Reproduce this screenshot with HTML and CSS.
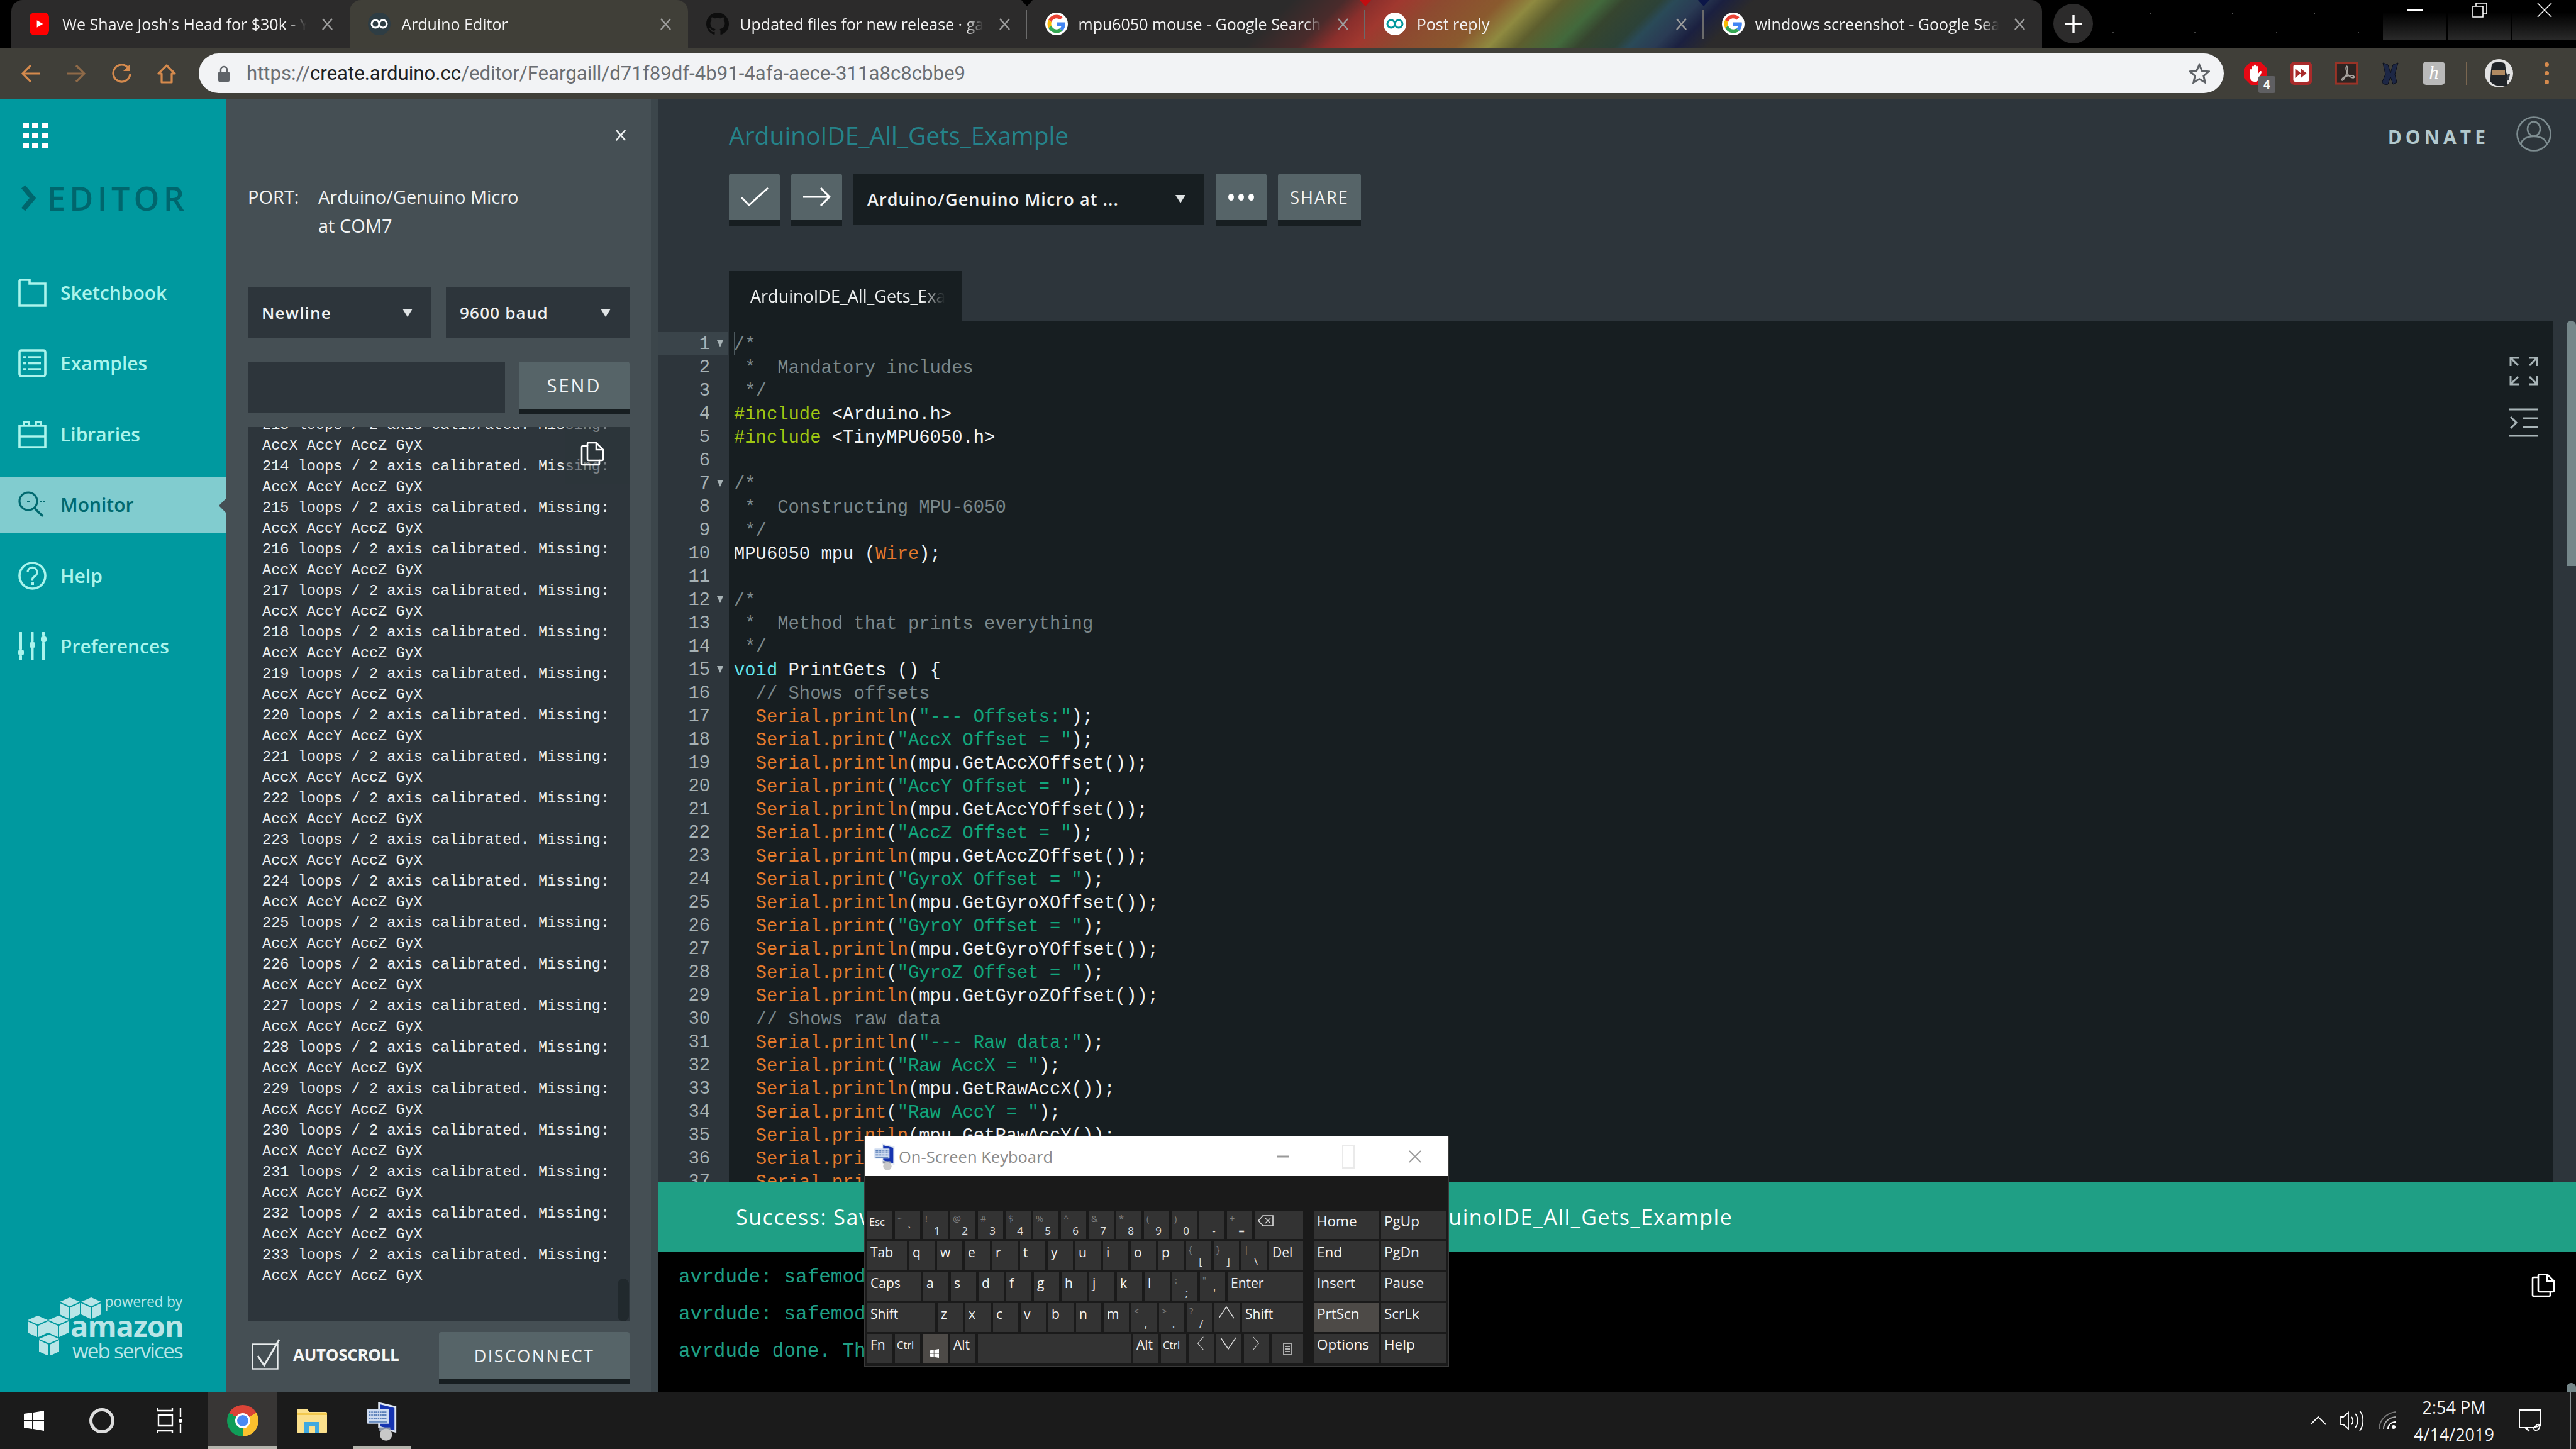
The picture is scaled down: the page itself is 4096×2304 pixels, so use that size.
FILE: index.html
```html
<!DOCTYPE html>
<html lang="en">
<head>
<meta charset="utf-8">
<title>Arduino Editor</title>
<link rel="stylesheet" href="styles.css">
</head>
<body>
<svg class="defs" aria-hidden="true">
  <symbol id="x" viewBox="0 0 20 20"><path d="M2 1l16 18M18 1L2 19" fill="none" stroke="currentColor" stroke-width="2.6"/></symbol>
  <symbol id="g" viewBox="-6 -6 60 60"><circle cx="24" cy="24" r="30" fill="#fff"/><path fill="#EA4335" d="M24 9.5c3.54 0 6.71 1.22 9.21 3.6l6.85-6.85C35.9 2.38 30.47 0 24 0 14.62 0 6.51 5.38 2.56 13.22l7.98 6.19C12.43 13.72 17.74 9.5 24 9.5z"/><path fill="#4285F4" d="M46.98 24.55c0-1.57-.15-3.09-.38-4.55H24v9.02h12.94c-.58 2.96-2.26 5.48-4.78 7.18l7.73 6c4.51-4.18 7.09-10.36 7.09-17.65z"/><path fill="#FBBC05" d="M10.53 28.59c-.48-1.45-.76-2.99-.76-4.59s.27-3.14.76-4.59l-7.98-6.19C.92 16.46 0 20.12 0 24c0 3.88.92 7.54 2.56 10.78l7.97-6.19z"/><path fill="#34A853" d="M24 48c6.48 0 11.93-2.13 15.89-5.81l-7.73-6c-2.15 1.45-4.92 2.3-8.16 2.3-6.26 0-11.57-4.22-13.47-9.91l-7.98 6.19C6.51 42.62 14.62 48 24 48z"/></symbol>
  <symbol id="copy" viewBox="0 0 38 38"><path d="M11 6V3a2 2 0 0 1 2-2h12l11 11v15a2 2 0 0 1-2 2h-4M25 1v11h11" fill="none" stroke="currentColor" stroke-width="2.6"/><path d="M11 6H4a2 2 0 0 0-2 2v26a2 2 0 0 0 2 2h24a2 2 0 0 0 2-2v-5H13a2 2 0 0 1-2-2z" fill="none" stroke="currentColor" stroke-width="2.6"/></symbol>
  <symbol id="cube" viewBox="0 0 32 34"><path d="M16 0l16 7-16 7L0 7z"/><path d="M0 9l15 7v18L0 27z"/><path d="M32 9l-15 7v18l15-7z"/></symbol>
  <symbol id="osk" viewBox="0 0 54 66"><path d="M20 2l30 7v44l-30-8z" fill="#dfe7f2"/><path d="M23 6l24 6v37l-24-7z" fill="#1533b0"/><rect x="2" y="14" width="36" height="24" rx="1" fill="#cfdcf0"/><path d="M5 19h30M5 24h30M5 29h30" stroke="#5a7fb8" stroke-width="2.6" stroke-dasharray="2.6 1"/><rect x="5" y="33" width="30" height="3" fill="#6a8dc0"/><path d="M22 44h18v6H22z" fill="#8d96a8"/><circle cx="33" cy="56" r="10" fill="#c8c8c8"/></symbol>
</svg>

<header class="tabstrip">
  <div class="tabs">
    <div class="tab">
      <svg class="fav-yt" viewBox="0 0 32 36"><rect width="32" height="36" rx="7" fill="#f00"/><path d="M12 12l10 6-10 6z" fill="#fff"/></svg>
      <span class="tab-title">We Shave Josh's Head for $30k - YouTube</span>
      <svg class="tab-x"><use href="#x"/></svg>
    </div>
    <div class="tab active">
      <svg class="fav" viewBox="0 0 36 36"><circle cx="18" cy="18" r="18" fill="#2e3d44"/><g fill="none" stroke="#fff" stroke-width="3"><circle cx="12" cy="18" r="6"/><circle cx="24" cy="18" r="6"/></g></svg>
      <span class="tab-title">Arduino Editor</span>
      <svg class="tab-x"><use href="#x"/></svg>
    </div>
    <div class="tab notch-black">
      <svg class="fav" viewBox="0 0 16 16"><path fill="#0d0d0d" d="M8 0C3.58 0 0 3.58 0 8c0 3.54 2.29 6.53 5.47 7.59.4.07.55-.17.55-.38 0-.19-.01-.82-.01-1.49-2.01.37-2.53-.49-2.69-.94-.09-.23-.48-.94-.82-1.13-.28-.15-.68-.52-.01-.53.63-.01 1.08.58 1.23.82.72 1.21 1.87.87 2.33.66.07-.52.28-.87.51-1.07-1.78-.2-3.64-.89-3.64-3.95 0-.87.31-1.59.82-2.15-.08-.2-.36-1.02.08-2.12 0 0 .67-.21 2.2.82.64-.18 1.32-.27 2-.27.68 0 1.36.09 2 .27 1.53-1.04 2.2-.82 2.2-.82.44 1.1.16 1.92.08 2.12.51.56.82 1.27.82 2.15 0 3.07-1.87 3.75-3.65 3.95.29.25.54.73.54 1.48 0 1.07-.01 1.93-.01 2.2 0 .21.15.46.55.38A8.013 8.013 0 0016 8c0-4.42-3.58-8-8-8z"/></svg>
      <span class="tab-title">Updated files for new release · gabriel</span>
      <svg class="tab-x"><use href="#x"/></svg>
    </div>
    <div class="tab notch-red">
      <svg class="fav"><use href="#g"/></svg>
      <span class="tab-title">mpu6050 mouse - Google Search</span>
      <svg class="tab-x"><use href="#x"/></svg>
    </div>
    <div class="tab notch-navy">
      <svg class="fav" viewBox="0 0 36 36"><circle cx="18" cy="18" r="18" fill="#fff"/><g fill="none" stroke="#00979c" stroke-width="3"><circle cx="12" cy="18" r="6"/><circle cx="24" cy="18" r="6"/></g></svg>
      <span class="tab-title">Post reply</span>
      <svg class="tab-x"><use href="#x"/></svg>
    </div>
    <div class="tab last">
      <svg class="fav"><use href="#g"/></svg>
      <span class="tab-title">windows screenshot - Google Search</span>
      <svg class="tab-x"><use href="#x"/></svg>
    </div>
  </div>
  <div class="newtab"><svg viewBox="0 0 28 28"><path d="M14 0v28M0 14h28" stroke="#fff" stroke-width="3.4"/></svg></div>
  <div class="caption">
    <div class="cap-btn"><svg viewBox="0 0 24 24"><path d="M0 12h24" stroke="#fff" stroke-width="2"/></svg></div>
    <div class="cap-btn"><svg viewBox="0 0 24 24"><path d="M1 6h16v17H1zM6 6V1h17v17h-6" fill="none" stroke="#fff" stroke-width="1.6"/></svg></div>
    <div class="cap-btn"><svg viewBox="0 0 24 24"><path d="M1 1l22 22M23 1L1 23" stroke="#fff" stroke-width="1.6"/></svg></div>
  </div>
</header>

<nav class="toolbar">
  <svg class="tb-ico" viewBox="0 0 30 32"><path d="M29 16H3M15 3L2 16l13 13" fill="none" stroke="#d58a4d" stroke-width="3.2"/></svg>
  <svg class="tb-ico dim" viewBox="0 0 30 32"><path d="M1 16h26M15 3l13 13-13 13" fill="none" stroke="#8f6a48" stroke-width="3.2"/></svg>
  <svg class="tb-ico" viewBox="0 0 30 32"><path d="M26 7a13.5 13.5 0 1 0 3 9" fill="none" stroke="#d58a4d" stroke-width="3.2"/><path d="M29 1v11H18z" fill="#d58a4d"/></svg>
  <svg class="tb-ico" viewBox="0 0 30 32"><path d="M15 3L2 16h5v14h16V16h5z" fill="none" stroke="#d58a4d" stroke-width="3.2" stroke-linejoin="round"/></svg>
  <div class="address">
    <svg class="lock" viewBox="0 0 18 26"><path d="M4 11V7a5 5 0 0 1 10 0v4" fill="none" stroke="#5f6368" stroke-width="2.4"/><rect y="10" width="18" height="16" rx="2" fill="#5f6368"/></svg>
    <span class="url"><span class="url-dim">https://</span>create.arduino.cc<span class="url-dim">/editor/Feargaill/d71f89df-4b91-4afa-aece-311a8c8cbbe9</span></span>
    <svg class="star" viewBox="0 0 34 34"><path d="M17 3l4.3 9.6 10.4 1.1-7.8 7 2.2 10.3L17 25.8 7.900 31l2.200-10.300-7.800-7 10.400-1.100z" fill="none" stroke="#5f6368" stroke-width="3"/></svg>
  </div>
  <div class="exts">
    <div class="ext-ab">
      <svg viewBox="0 0 37 37"><path d="M11 0h15l11 11v15L26 37H11L0 26V11z" fill="#e50914"/><path d="M10 22V13a1.500 1.500 0 0 1 3 0v5V8a1.500 1.500 0 0 1 3 0v9V6a1.500 1.500 0 0 1 3 0v11V8a1.500 1.500 0 0 1 3 0v12l3-4a1.500 1.500 0 0 1 3 1l-4 10c-1 3-3 5-7 5-5 0-7-3-7-7z" fill="#fff"/></svg>
      <span class="badge">4</span>
    </div>
    <svg class="ext-i" viewBox="0 0 35 37"><rect width="35" height="37" rx="7" fill="#a92b2b"/><rect x="5" y="5" width="25" height="27" rx="3" fill="#fff"/><path d="M8 11l9 7.500-9 7.500zM17 11l9 7.500-9 7.500z" fill="#a92b2b"/></svg>
    <svg class="ext-i" viewBox="0 0 37 37"><rect x="1.500" y="1.500" width="34" height="34" fill="#2d2422" stroke="#9a3327" stroke-width="3"/><path d="M19 7c-3 2 0 10 1 12s5 7 9 7 2-4-2-4-11 1-14 4-3 4-1 4 7-10 8-14 0-9-1-9z" fill="none" stroke="#a9a39f" stroke-width="2"/></svg>
    <svg class="ext-z" viewBox="0 0 31 37"><path d="M4 2l8 3 4 13 4-13 8-3-5 18 3 13-6 3-4-12-4 12c-4 1-9 0-9-4l5-12z" fill="#1d2745" stroke="#0b0f1c" stroke-width="1"/></svg>
    <div class="ext-h">h</div>
    <div class="tb-sep"></div>
    <svg class="avatar" viewBox="0 0 45 45"><circle cx="22.500" cy="22.500" r="22.500" fill="#e2e2e2"/><path d="M9 36c0-8 1-26 3-29 4-3 17-3 20 0l2 14 3 8-2 13c-4 2-20 2-26-6z" fill="#202428"/><rect x="12" y="18" width="20" height="8" fill="#b08a62"/><path d="M34 32l3-9 3 1-2 10z" fill="#3a3f45"/></svg>
    <div class="menu-dots"><i></i><i></i><i></i></div>
  </div>
</nav>

<div class="app">
  <aside class="sidebar">
    <div class="apps-grid"><i></i><i></i><i></i><i></i><i></i><i></i><i></i><i></i><i></i></div>
    <div class="brand">
      <svg viewBox="0 0 26 42"><path d="M5 3l15 18L5 39" fill="none" stroke="#00666d" stroke-width="8"/></svg>
      <span>EDITOR</span>
    </div>
    <ul class="nav">
      <li class="nav-item"><svg viewBox="0 0 45 45"><path d="M2 43V4c0-1 1-2 2-2h14v6h25v35z" fill="none" stroke="currentColor" stroke-width="3.600"/></svg>Sketchbook</li>
      <li class="nav-item"><svg viewBox="0 0 45 45"><rect x="2" y="2" width="41" height="41" rx="3" fill="none" stroke="currentColor" stroke-width="3.600"/><path d="M16 13h20M16 22.500h20M16 32h20" stroke="currentColor" stroke-width="3.600"/><path d="M8 13h4M8 22.500h4M8 32h4" stroke="currentColor" stroke-width="3.600"/></svg>Examples</li>
      <li class="nav-item"><svg viewBox="0 0 45 45"><path d="M2 9h41v34H2zM2 26h41M9 8V3h8v5M28 8V3h8v5" fill="none" stroke="currentColor" stroke-width="3.600"/></svg>Libraries</li>
      <li class="nav-item active"><svg viewBox="0 0 45 45"><circle cx="16" cy="17" r="14" fill="none" stroke="currentColor" stroke-width="3.200"/><path d="M26 28l13 13" stroke="currentColor" stroke-width="3.600"/><path d="M14 16h4v3h-4zM35 16h3v3h-3zM40 16h3v3h-3z" fill="currentColor"/></svg>Monitor</li>
      <li class="nav-item"><svg viewBox="0 0 45 45"><circle cx="22.500" cy="22.500" r="20.500" fill="none" stroke="currentColor" stroke-width="3.600"/><path d="M15 17a7.500 7.500 0 1 1 11 6.500c-2 1-3.500 2.500-3.500 5v2" fill="none" stroke="currentColor" stroke-width="3.200"/><rect x="20" y="33" width="5" height="4" fill="currentColor"/></svg>Help</li>
      <li class="nav-item"><svg viewBox="0 0 45 45"><path d="M4 1v26M4 38v6M22.500 1v14M22.500 26v18M40 1v4M40 17v27" stroke="currentColor" stroke-width="4" stroke-linecap="round"/><rect x="0" y="28" width="9" height="9" rx="3" fill="currentColor"/><rect x="18" y="16" width="9" height="9" rx="3" fill="currentColor"/><rect x="36" y="7" width="9" height="9" rx="3" fill="currentColor"/></svg>Preferences</li>
    </ul>
    <div class="aws">
      <svg class="aws-cubes" viewBox="0 0 118 92" fill="#b9e5e7"><use href="#cube" x="51" y="0" width="32" height="34"/><use href="#cube" x="85" y="0" width="32" height="34"/><use href="#cube" x="0" y="29" width="32" height="34"/><use href="#cube" x="33" y="29" width="32" height="34"/><use href="#cube" x="18" y="59" width="32" height="34"/></svg>
      <div class="aws-by">powered by</div>
      <div class="aws-amazon">amazon</div>
      <div class="aws-ws">web services</div>
    </div>
  </aside>

  <section class="panel">
    <div class="panel-close"><svg viewBox="0 0 20 20"><use href="#x"/></svg></div>
    <div class="port"><span class="port-label">PORT:</span><span class="port-name">Arduino/Genuino Micro<br>at COM7</span></div>
    <div class="panel-selects">
      <div class="select">Newline<i class="caret"></i></div>
      <div class="select">9600 baud<i class="caret"></i></div>
    </div>
    <div class="panel-send">
      <div class="send-input"></div>
      <div class="btn send-btn">SEND</div>
    </div>
    <div class="log">
<pre class="log-text">213 loops / 2 axis calibrated. Missing:
AccX AccY AccZ GyX
214 loops / 2 axis calibrated. Missing:
AccX AccY AccZ GyX
215 loops / 2 axis calibrated. Missing:
AccX AccY AccZ GyX
216 loops / 2 axis calibrated. Missing:
AccX AccY AccZ GyX
217 loops / 2 axis calibrated. Missing:
AccX AccY AccZ GyX
218 loops / 2 axis calibrated. Missing:
AccX AccY AccZ GyX
219 loops / 2 axis calibrated. Missing:
AccX AccY AccZ GyX
220 loops / 2 axis calibrated. Missing:
AccX AccY AccZ GyX
221 loops / 2 axis calibrated. Missing:
AccX AccY AccZ GyX
222 loops / 2 axis calibrated. Missing:
AccX AccY AccZ GyX
223 loops / 2 axis calibrated. Missing:
AccX AccY AccZ GyX
224 loops / 2 axis calibrated. Missing:
AccX AccY AccZ GyX
225 loops / 2 axis calibrated. Missing:
AccX AccY AccZ GyX
226 loops / 2 axis calibrated. Missing:
AccX AccY AccZ GyX
227 loops / 2 axis calibrated. Missing:
AccX AccY AccZ GyX
228 loops / 2 axis calibrated. Missing:
AccX AccY AccZ GyX
229 loops / 2 axis calibrated. Missing:
AccX AccY AccZ GyX
230 loops / 2 axis calibrated. Missing:
AccX AccY AccZ GyX
231 loops / 2 axis calibrated. Missing:
AccX AccY AccZ GyX
232 loops / 2 axis calibrated. Missing:
AccX AccY AccZ GyX
233 loops / 2 axis calibrated. Missing:
AccX AccY AccZ GyX</pre>
      <div class="log-fade"></div>
      <svg class="log-copy"><use href="#copy"/></svg>
      <div class="log-thumb"></div>
    </div>
    <div class="panel-foot">
      <div class="autoscroll">
        <svg viewBox="0 0 46 50"><rect x="1.500" y="9.500" width="40" height="39" fill="none" stroke="#e8eced" stroke-width="2.400"/><path d="M10 28l10 15L44 2" fill="none" stroke="#e8eced" stroke-width="3"/></svg>
        <span>AUTOSCROLL</span>
      </div>
      <div class="btn disc-btn">DISCONNECT</div>
    </div>
  </section>

  <main class="main">
    <div class="main-head">
      <div class="title-row">
        <span class="sketch-title">ArduinoIDE_All_Gets_Example</span>
        <span class="donate">DONATE</span>
        <svg class="user" viewBox="0 0 56 56"><circle cx="28" cy="28" r="26.500" fill="none" stroke="#7d8c90" stroke-width="2.600"/><ellipse cx="28" cy="20" rx="10" ry="11.500" fill="none" stroke="#7d8c90" stroke-width="2.600"/><path d="M7 45c2-9 10-13 21-13s19 4 21 13" fill="none" stroke="#7d8c90" stroke-width="2.600"/></svg>
      </div>
      <div class="action-row">
        <div class="btn icon-btn"><svg viewBox="0 0 44 30"><path d="M1 16l12 12L43 1" fill="none" stroke="#fff" stroke-width="3"/></svg></div>
        <div class="btn icon-btn"><svg viewBox="0 0 44 30"><path d="M0 15h42M28 1l14 14-14 14" fill="none" stroke="#fff" stroke-width="3"/></svg></div>
        <div class="select board">Arduino/Genuino Micro at ...<i class="caret"></i></div>
        <div class="btn icon-btn dots"><i></i><i></i><i></i></div>
        <div class="btn share-btn">SHARE</div>
      </div>
      <div class="file-tabs"><div class="file-tab"><span>ArduinoIDE_All_Gets_Example</span></div></div>
    </div>

    <div class="editor">
      <div class="gutter">
        <div class="gl cur">1<i class="fold"></i></div><div class="gl">2</div><div class="gl">3</div><div class="gl">4</div><div class="gl">5</div><div class="gl">6</div><div class="gl">7<i class="fold"></i></div><div class="gl">8</div><div class="gl">9</div><div class="gl">10</div><div class="gl">11</div><div class="gl">12<i class="fold"></i></div><div class="gl">13</div><div class="gl">14</div><div class="gl">15<i class="fold"></i></div><div class="gl">16</div><div class="gl">17</div><div class="gl">18</div><div class="gl">19</div><div class="gl">20</div><div class="gl">21</div><div class="gl">22</div><div class="gl">23</div><div class="gl">24</div><div class="gl">25</div><div class="gl">26</div><div class="gl">27</div><div class="gl">28</div><div class="gl">29</div><div class="gl">30</div><div class="gl">31</div><div class="gl">32</div><div class="gl">33</div><div class="gl">34</div><div class="gl">35</div><div class="gl">36</div><div class="gl">37</div>
      </div>
      <div class="code-wrap">
<pre class="code"><span class="c">/*
 *  Mandatory includes
 */</span>
<span class="p">#include</span> &lt;Arduino.h&gt;
<span class="p">#include</span> &lt;TinyMPU6050.h&gt;

<span class="c">/*
 *  Constructing MPU-6050
 */</span>
MPU6050 mpu (<span class="o">Wire</span>);

<span class="c">/*
 *  Method that prints everything
 */</span>
<span class="t">void</span> PrintGets () {
  <span class="c">// Shows offsets</span>
  <span class="o">Serial.println</span>(<span class="s">"--- Offsets:"</span>);
  <span class="o">Serial.print</span>(<span class="s">"AccX Offset = "</span>);
  <span class="o">Serial.println</span>(mpu.GetAccXOffset());
  <span class="o">Serial.print</span>(<span class="s">"AccY Offset = "</span>);
  <span class="o">Serial.println</span>(mpu.GetAccYOffset());
  <span class="o">Serial.print</span>(<span class="s">"AccZ Offset = "</span>);
  <span class="o">Serial.println</span>(mpu.GetAccZOffset());
  <span class="o">Serial.print</span>(<span class="s">"GyroX Offset = "</span>);
  <span class="o">Serial.println</span>(mpu.GetGyroXOffset());
  <span class="o">Serial.print</span>(<span class="s">"GyroY Offset = "</span>);
  <span class="o">Serial.println</span>(mpu.GetGyroYOffset());
  <span class="o">Serial.print</span>(<span class="s">"GyroZ Offset = "</span>);
  <span class="o">Serial.println</span>(mpu.GetGyroZOffset());
  <span class="c">// Shows raw data</span>
  <span class="o">Serial.println</span>(<span class="s">"--- Raw data:"</span>);
  <span class="o">Serial.print</span>(<span class="s">"Raw AccX = "</span>);
  <span class="o">Serial.println</span>(mpu.GetRawAccX());
  <span class="o">Serial.print</span>(<span class="s">"Raw AccY = "</span>);
  <span class="o">Serial.println</span>(mpu.GetRawAccY());
  <span class="o">Serial.print</span>(<span class="s">"Raw AccZ = "</span>);
  <span class="o">Serial.println</span>(mpu.GetRawAccZ());</pre>
        <div class="caret-line"></div>
        <svg class="ed-ico ed-full" viewBox="0 0 46 46"><path d="M2 15V2h13M2 2l12 12M31 2h13v13M44 2L32 14M2 31v13h13M2 44l12-12M44 31v13H31M44 44L32 32" fill="none" stroke="#a9b5b8" stroke-width="3"/></svg>
        <svg class="ed-ico ed-outdent" viewBox="0 0 46 46"><path d="M0 2h46M22 16h24M22 30h24M0 44h46" stroke="#a9b5b8" stroke-width="3"/><path d="M2 14l9 9-9 9" fill="none" stroke="#a9b5b8" stroke-width="3"/></svg>
      </div>
      <div class="ed-scroll"><div class="ed-thumb"></div></div>
    </div>

    <div class="status">Success: Saved on your online Sketchbook and done verifying ArduinoIDE_All_Gets_Example</div>
    <div class="console">
<pre>avrdude: safemode: hfuse reads as D8
avrdude: safemode: efuse reads as CB
avrdude done. Thank you.</pre>
      <svg class="console-copy"><use href="#copy"/></svg>
    </div>
  </main>
</div>

<footer class="taskbar">
  <div class="tb-slot"><svg class="win" viewBox="0 0 32 32"><path d="M0 5l13-2v12H0zM15 3l17-3v15H15zM0 17h13v12L0 27zM15 17h17v15l-17-3z" fill="#fff"/></svg></div>
  <div class="tb-slot"><svg class="cortana" viewBox="0 0 40 40"><circle cx="20" cy="20" r="17.500" fill="none" stroke="#ddd" stroke-width="5"/></svg></div>
  <div class="tb-slot"><svg class="taskview" viewBox="0 0 42 40"><path d="M1 0v4h24V0M1 40v-4h24v4M3 11h22v17H3zM38 0v14M38 26v14" fill="none" stroke="#fff" stroke-width="2.400"/><circle cx="38" cy="20" r="3" fill="#fff"/></svg></div>
  <div class="tb-slot tb-chrome open"><div class="chrome"></div></div>
  <div class="tb-slot tb-explorer"><svg class="explorer" viewBox="0 0 48 40"><path d="M0 3a2 2 0 0 1 2-2h14l4 5h26a2 2 0 0 1 2 2v30a2 2 0 0 1-2 2H2a2 2 0 0 1-2-2z" fill="#fbe08c"/><path d="M0 8h48v3H0z" fill="#f2c94f"/><path d="M12 40V22h24v18h-7V28H19v12z" fill="#3fa9e0"/></svg></div>
  <div class="tb-slot tb-osk open"><svg class="osk-app"><use href="#osk"/></svg></div>
  <div class="tray">
    <svg class="tr-caret" viewBox="0 0 26 14"><path d="M1 13L13 1l12 12" fill="none" stroke="#fff" stroke-width="1.800"/></svg>
    <svg class="tr-vol" viewBox="0 0 38 34"><path d="M1 11h4l8-7v26l-8-7H1zM18 11c3 3 3 9 0 12M24 6c5 6 5 16 0 22M31 1c7 9 7 23 0 32" fill="none" stroke="#fff" stroke-width="1.800"/></svg>
    <svg class="tr-wifi" viewBox="0 0 28 30"><path d="M1 28C1 15 12 3 27 1" fill="none" stroke="#777" stroke-width="2"/><path d="M8 28c0-10 8-18 19-19" fill="none" stroke="#aaa" stroke-width="2"/><path d="M15 28c0-6 5-11 12-11" fill="none" stroke="#fff" stroke-width="2"/><circle cx="24" cy="25" r="3" fill="#fff"/></svg>
    <div class="clock"><span>2:54 PM</span><span>4/14/2019</span></div>
    <svg class="tr-note" viewBox="0 0 36 36"><path d="M1 1h34v25c-2-3-7-3-8 1l-1 2H12l5 6-7-6H1z" fill="none" stroke="#fff" stroke-width="2"/><path d="M33 25c1 4-2 9-7 8-2-1-3-3-1-5 3 0 6-1 8-3z" fill="none" stroke="#fff" stroke-width="1.800"/></svg>
  </div>
  <div class="edge-line"></div>
  <div class="edge-thumb"></div>
</footer>

<div class="osk">
  <div class="osk-title">
    <svg class="osk-icon"><use href="#osk"/></svg>
    <span>On-Screen Keyboard</span>
    <svg class="osk-min" viewBox="0 0 20 4"><path d="M0 2h20" stroke="#999" stroke-width="3"/></svg>
    <div class="osk-max"></div>
    <svg class="osk-close" viewBox="0 0 20 20"><path d="M1 1l18 18M19 1L1 19" stroke="#999" stroke-width="1.800"/></svg>
  </div>
  <div class="osk-body">
    <div class="osk-main">
      <div class="osk-row">
        <div class="key sm">Esc</div><div class="key two"><em>~</em><b>`</b></div><div class="key two"><em>!</em><b>1</b></div><div class="key two"><em>@</em><b>2</b></div><div class="key two"><em>#</em><b>3</b></div><div class="key two"><em>$</em><b>4</b></div><div class="key two"><em>%</em><b>5</b></div><div class="key two"><em>^</em><b>6</b></div><div class="key two"><em>&amp;</em><b>7</b></div><div class="key two"><em>*</em><b>8</b></div><div class="key two"><em>(</em><b>9</b></div><div class="key two"><em>)</em><b>0</b></div><div class="key two"><em>_</em><b>-</b></div><div class="key two"><em>+</em><b>=</b></div>
        <div class="key w77"><svg class="bksp" viewBox="0 0 26 20"><path d="M8 2h16v16H8L1 10z" fill="none" stroke="#ddd" stroke-width="1.600"/><path d="M12 6l8 8M20 6l-8 8" stroke="#ddd" stroke-width="1.400"/></svg></div>
      </div>
      <div class="osk-row">
        <div class="key w63">Tab</div><div class="key">q</div><div class="key">w</div><div class="key">e</div><div class="key">r</div><div class="key">t</div><div class="key">y</div><div class="key">u</div><div class="key">i</div><div class="key">o</div><div class="key">p</div><div class="key two"><em>{</em><b>[</b></div><div class="key two"><em>}</em><b>]</b></div><div class="key two"><em>|</em><b>\</b></div><div class="key w54">Del</div>
      </div>
      <div class="osk-row">
        <div class="key w85">Caps</div><div class="key">a</div><div class="key">s</div><div class="key">d</div><div class="key">f</div><div class="key">g</div><div class="key">h</div><div class="key">j</div><div class="key">k</div><div class="key">l</div><div class="key two"><em>:</em><b>;</b></div><div class="key two"><em>"</em><b>'</b></div><div class="key w120">Enter</div>
      </div>
      <div class="osk-row">
        <div class="key w108">Shift</div><div class="key">z</div><div class="key">x</div><div class="key">c</div><div class="key">v</div><div class="key">b</div><div class="key">n</div><div class="key">m</div><div class="key two"><em>&lt;</em><b>,</b></div><div class="key two"><em>&gt;</em><b>.</b></div><div class="key two"><em>?</em><b>/</b></div><div class="key arrow"><svg viewBox="0 0 26 20"><path d="M1 19L13 1l12 18" fill="none" stroke="#ddd" stroke-width="1.400"/></svg></div><div class="key w97">Shift</div>
      </div>
      <div class="osk-row">
        <div class="key">Fn</div><div class="key sm">Ctrl</div><div class="key hl"><svg class="winkey" viewBox="0 0 32 32"><path d="M0 5l13-2v12H0zM15 3l17-3v15H15zM0 17h13v12L0 27zM15 17h17v15l-17-3z" fill="#fff"/></svg></div><div class="key">Alt</div><div class="key w243"></div><div class="key">Alt</div><div class="key sm">Ctrl</div><div class="key arrow"><svg viewBox="0 0 16 30"><path d="M14 1L2 15l12 14" fill="none" stroke="#ddd" stroke-width="1.400"/></svg></div><div class="key arrow"><svg viewBox="0 0 26 20"><path d="M1 1l12 18L25 1" fill="none" stroke="#ddd" stroke-width="1.400"/></svg></div><div class="key arrow"><svg viewBox="0 0 16 30"><path d="M2 1l12 14L2 29" fill="none" stroke="#ddd" stroke-width="1.400"/></svg></div><div class="key w50 menukey"><svg viewBox="0 0 14 20"><rect x="1" y="1" width="12" height="18" fill="none" stroke="#ddd" stroke-width="1.400"/><path d="M3 6h8M3 10h8M3 14h8" stroke="#ddd" stroke-width="1.400"/></svg></div>
      </div>
    </div>
    <div class="osk-nav">
      <div class="key wn">Home</div><div class="key wn">PgUp</div>
      <div class="key wn">End</div><div class="key wn">PgDn</div>
      <div class="key wn">Insert</div><div class="key wn">Pause</div>
      <div class="key wn hl">PrtScn</div><div class="key wn">ScrLk</div>
      <div class="key wn">Options</div><div class="key wn">Help</div>
    </div>
  </div>
</div>
</body>
</html>
```
FILE: styles.css
```css
* { box-sizing: border-box; }
html, body { margin: 0; padding: 0; }
body {
  width: 4096px; height: 2304px; overflow: hidden; position: relative;
  display: flex; flex-direction: column;
  font-family: "Open Sans", "Noto Sans", sans-serif;
  background: #000; color: #fff;
}
.defs { position: absolute; width: 0; height: 0; }
pre { margin: 0; }

/* tab strip */
.tabstrip {
  height: 76px; flex: none; display: flex; align-items: flex-start; background: #000;
  background-image:
    radial-gradient(circle at 40px 22px, #555 0 1px, transparent 1.500px),
    radial-gradient(circle at 110px 52px, #444 0 1px, transparent 1.500px);
  background-size: 130px 70px;
}
.tabs {
  margin-left: 18px; width: 3229px; height: 76px; display: flex; flex: none;
  border-radius: 18px 18px 0 0;
  background: linear-gradient(135deg, #2c2b2b 1440px, #4a2b2b 1499px, #8a2f2c 1531px, #a0382f 1562px, #8d4a30 1609px, #8a5a2e 1676px, #8f8a40 1713px, #5d5e2e 1745px, #42693c 1789px, #36452f 1814px, #2c4238 1855px, #2a4a58 1871px, #2a3b54 1900px, #1b2040 1925px, #2c2b2b 1960px);
}
.tab {
  flex: 1 1 0; min-width: 0; height: 76px; display: flex; align-items: center; position: relative;
  padding: 0 26px 0 29px; border-radius: 18px 18px 0 0;
}
.tab.active { background: #403f38; }
.tab::after {
  content: ""; position: absolute; right: 0; top: 16px; width: 1.500px; height: 46px; background: #6b6b6b;
}
.tab:first-child::after, .tab.active::after, .tab.last::after { display: none; }
.tab.notch-black::before, .tab.notch-red::before, .tab.notch-navy::before {
  content: ""; position: absolute; right: -9px; top: 0; z-index: 1;
  border-left: 9px solid transparent; border-right: 9px solid transparent; border-top: 10px solid #000;
}
.tab.notch-red::before { border-top-color: #c30c10; }
.tab.notch-navy::before { border-top-color: #0c1648; }
.fav, .fav-yt { width: 36px; height: 36px; flex: none; }
.fav-yt { width: 31px; }
.tab:first-child .tab-title { margin-left: 21px; }
.tab-title {
  margin-left: 17px; flex: 1; min-width: 0; font-size: 25px; white-space: nowrap; overflow: hidden;
  color: #f2f2f2;
  -webkit-mask-image: linear-gradient(90deg, #000 calc(100% - 28px), transparent);
  mask-image: linear-gradient(90deg, #000 calc(100% - 28px), transparent);
}
.tab-x { width: 19px; height: 21px; margin-left: 24px; color: #9d9d9d; flex: none; }
.newtab {
  width: 63px; height: 63px; margin: 6px 0 0 18px; border-radius: 50%; background: #2c2b2b; flex: none;
  display: flex; align-items: center; justify-content: center;
}
.newtab svg { width: 28px; height: 28px; }
.caption { margin-left: auto; display: flex; gap: 2px; height: 64px; }
.cap-btn {
  width: 101px; height: 64px; display: flex; align-items: center; justify-content: center;
  background: linear-gradient(180deg, #000 30%, #2a2a2a);
  padding-bottom: 32px;
}
.cap-btn svg { width: 24px; height: 24px; }

/* toolbar */
.toolbar {
  height: 82px; flex: none; display: flex; align-items: center; background: #403f39;
  padding-left: 34px; border-bottom: 1px solid #2a2a2a;
}
.tb-ico { width: 30px; height: 32px; margin-right: 42px; flex: none; }
.tb-ico:nth-of-type(4) { margin-right: 36px; }
.address {
  width: 3220px; height: 63px; border-radius: 32px; background: #f2f3f5; display: flex; align-items: center;
  padding: 0 22px 0 31px; color: #202124; font-family: Roboto, sans-serif; flex: none;
}
.lock { width: 18px; height: 26px; flex: none; }
.url { margin-left: 27px; font-size: 31.150px; }
.url-dim { color: #6a6e73; }
.star { width: 34px; height: 34px; margin-left: auto; }
.exts { margin-left: 32px; display: flex; align-items: center; gap: 36px; }
.ext-ab { width: 37px; height: 37px; position: relative; }
.ext-ab svg { width: 37px; height: 37px; display: block; }
.badge {
  position: absolute; left: 23px; top: 23px; width: 27px; height: 27px; border-radius: 3px;
  background: #5f5f62; color: #fff; font: 700 19px "Open Sans", sans-serif; text-align: center; line-height: 27px;
}
.ext-i { width: 36px; height: 37px; flex: none; }
.ext-z { width: 31px; height: 37px; flex: none; }
.ext-h {
  width: 36px; height: 37px; border-radius: 6px; background: #b9b9b9; color: #fff; text-align: center;
  font: italic 30px/34px "Liberation Serif", serif;
}
.tb-sep { width: 1.500px; height: 36px; background: #7a6650; margin-left: -3px; margin-right: -8px; }
.avatar { width: 45px; height: 45px; flex: none; }
.menu-dots { display: flex; flex-direction: column; gap: 7px; margin-left: 14px; }
.menu-dots i { width: 7px; height: 7px; border-radius: 50%; background: #d58a4d; }

/* app */
.app { height: 2056px; flex: none; display: flex; }
.sidebar {
  width: 360px; flex: none; background: #00999f; display: flex; flex-direction: column; position: relative;
}
.apps-grid {
  margin: 37px 0 0 36px; width: 40px; height: 41px; display: grid; grid-template-columns: repeat(3, 10px);
  grid-template-rows: repeat(3, 9px); gap: 7px 5px;
}
.apps-grid i { background: #fff; border-radius: 1px; }
.brand { display: flex; align-items: center; margin: 53px 0 0 32px; height: 52px; color: #00666d; }
.brand svg { width: 26px; height: 42px; }
.brand span { margin-left: 17px; font-size: 52px; font-weight: 600; letter-spacing: 6.300px; line-height: 52px; }
.nav { list-style: none; margin: 79px 0 0; padding: 0; display: flex; flex-direction: column; gap: 22.500px; }
.nav-item {
  height: 90px; display: flex; align-items: center; padding-left: 29px; gap: 22px;
  color: #aaf4ec; font-size: 30px; font-weight: 600; position: relative;
}
.nav-item svg { width: 45px; height: 45px; flex: none; }
.nav-item.active { background: #81cccf; color: #00696f; }
.nav-item.active::after {
  content: ""; position: absolute; right: 0; top: 34px;
  border-top: 12px solid transparent; border-bottom: 12px solid transparent; border-right: 12px solid #454f54;
}
.aws { margin: auto 0 49px 112px; width: 178px; position: relative; color: #b9e5e7; text-align: right; }
.aws-cubes { position: absolute; left: -68px; top: 10px; width: 118px; height: 92px; }
.aws-by { font-size: 23px; line-height: 32px; letter-spacing: -.3px; }
.aws-amazon { font-size: 47px; line-height: 46px; font-weight: 700; letter-spacing: -1px; }
.aws-ws { font-size: 33px; line-height: 34px; letter-spacing: -1.700px; white-space: nowrap; }

/* panel */
.panel {
  width: 686px; flex: none; background: #454f54; border-right: 11px solid #3c464b; padding: 0 34px;
  display: flex; flex-direction: column;
}
.panel-close { height: 134px; padding-top: 47px; display: flex; justify-content: flex-end; padding-right: 5px; color: #eef1f2; }
.panel-close svg { width: 18px; height: 20px; }
.port { display: flex; height: 92px; font-size: 29px; line-height: 46px; color: #f1f3f3; margin-top: -2px; margin-bottom: 2px; }
.port-label { width: 112px; flex: none; }
.panel-selects { margin-top: 73px; display: flex; gap: 23px; }
.select {
  flex: 1; height: 80px; background: #2d353b; display: flex; align-items: center; padding: 0 30px 0 22px;
  font-size: 26px; font-weight: 600; color: #f0f2f2; letter-spacing: 1.200px; position: relative;
}
.caret {
  margin-left: auto; width: 0; height: 0; flex: none;
  border-left: 8px solid transparent; border-right: 8px solid transparent; border-top: 13px solid #dfe3e4;
}
.panel-send { margin-top: 38px; display: flex; justify-content: space-between; height: 84px; }
.send-input { width: 409px; height: 81px; background: #2d353b; }
.btn {
  background: #566468; border-bottom: 9px solid #171e21; border-radius: 4px 4px 0 0; color: #f2f4f4;
  display: flex; align-items: center; justify-content: center; flex: none;
}
.send-btn { width: 176px; height: 84px; font-size: 29px; letter-spacing: 3px; }
.log { margin-top: 20px; height: 1422px; background: #2d353b; position: relative; overflow: hidden; flex: none; }
.log-text {
  margin: -20px 0 0; padding-left: 23px; font: 23.600px/33px "Liberation Mono", monospace; color: #eceff0;
}
.log-fade { position: absolute; left: 504px; top: 0; width: 103px; height: 90px; background: rgba(45,53,59,.58); }
.log-copy { position: absolute; left: 529px; top: 24px; width: 38px; height: 38px; color: #fff; }
.log-thumb { position: absolute; left: 588px; top: 1354px; width: 18px; height: 68px; border-radius: 9px; background: #21292d; }
.panel-foot { margin-top: 17px; display: flex; justify-content: space-between; }
.autoscroll { display: flex; align-items: center; gap: 20px; padding: 0 0 12px 6px; font-size: 26px; font-weight: 700; color: #f4f6f6; letter-spacing: -.3px; }
.autoscroll svg { width: 46px; height: 50px; margin-top: -2px; }
.disc-btn { width: 303px; height: 83px; font-size: 27px; letter-spacing: 2.400px; }

/* main */
.main { flex: 1; min-width: 0; display: flex; flex-direction: column; background: #2d353b; }
.main-head { height: 352px; flex: none; padding-left: 113px; display: flex; flex-direction: column; }
.title-row { height: 118px; display: flex; align-items: center; padding-right: 39px; flex: none; }
.sketch-title { font-size: 39px; color: #25838a; margin-top: -5px; }
.donate { margin-left: auto; font-size: 30px; font-weight: 700; letter-spacing: 6px; color: #b2c9cd; }
.user { width: 56px; height: 56px; margin-left: 43px; margin-top: -8px; }
.action-row { height: 155px; display: flex; align-items: flex-start; gap: 18px; flex: none; }
.icon-btn { width: 81px; height: 83px; }
.icon-btn svg { width: 44px; height: 30px; }
.dots { gap: 7px; }
.dots i { width: 9px; height: 11px; border-radius: 50%; background: #fff; }
.select.board { flex: none; width: 558px; height: 81px; background: #171e21; padding: 0 30px 0 22px; font-size: 27px; letter-spacing: 1.100px; }
.share-btn { width: 132px; height: 83px; font-size: 27px; letter-spacing: 2px; }
.file-tabs { height: 79px; display: flex; }
.file-tab { width: 371px; background: #171e21; padding-left: 34px; display: flex; align-items: center; color: #eef0f0; font-size: 27px; }
.file-tab span {
  width: 310px; overflow: hidden; white-space: nowrap;
  -webkit-mask-image: linear-gradient(90deg, #000 88%, transparent);
  mask-image: linear-gradient(90deg, #000 88%, transparent);
}

.editor { height: 1369px; flex: none; display: flex; overflow: hidden; }
.gutter { width: 113px; flex: none; padding-top: 18px; font: 28.850px/40px "Liberation Mono", monospace; color: #a7b2b5; }
.gl { text-align: right; padding-right: 29px; height: 37px; margin-right: 1px; position: relative; }
.gl.cur { background: #3a444a; }
.fold {
  position: absolute; right: 8px; top: 13px; width: 0; height: 0;
  border-left: 5.500px solid transparent; border-right: 5.500px solid transparent; border-top: 11px solid #a7b2b5;
}
.code-wrap { flex: 1; min-width: 0; background: #171e21; position: relative; }
.code { padding: 20px 0 0 8px; font: 28.850px/37px "Liberation Mono", monospace; color: #f2f3f3; }
.c { color: #7b888b; }
.p { color: #9fc612; }
.o { color: #e57a2c; }
.s { color: #12a57c; }
.t { color: #62e6ee; }
.caret-line { position: absolute; left: 8px; top: 18px; width: 1px; height: 37px; background: #4c585d; }
.ed-ico { position: absolute; left: 2831px; width: 46px; height: 46px; }
.ed-full { top: 57px; }
.ed-outdent { top: 139px; }
.ed-scroll { width: 37px; flex: none; display: flex; justify-content: flex-end; background: #2d353b; }
.ed-thumb { width: 15px; height: 390px; background: #75878a; border-radius: 8px 8px 0 0; }
.status {
  height: 112px; flex: none; background: #1f9f85; padding-left: 124px; display: flex; align-items: center;
  font-size: 34px; letter-spacing: 1.550px; color: #fff; white-space: nowrap;
}
.console { flex: 1; min-height: 0; background: #000; padding: 10px 0 0 33px; position: relative; color: #1f9f85; }
.console pre { font: 31px/59px "Liberation Mono", monospace; }
.console-copy { position: absolute; right: 33px; top: 34px; width: 38px; height: 38px; color: #fff; }

/* taskbar */
.taskbar { height: 90px; flex: none; background: #1b1b1b; display: flex; align-items: stretch; position: relative; }
.tb-slot { width: 108px; flex: none; display: flex; align-items: center; justify-content: center; border-bottom: 5px solid transparent; padding-top: 5px; }
.win { width: 32px; height: 32px; }
.cortana { width: 40px; height: 40px; }
.taskview { width: 42px; height: 40px; }
.tb-chrome { margin-left: 7px; width: 109px; background: #383635; }
.open { border-bottom-color: #b4b4ac; }
.chrome {
  width: 50px; height: 50px; border-radius: 50%; position: relative;
  background: conic-gradient(#db4437 0 60deg, #fbc02d 60deg 180deg, #0f9d58 180deg 300deg, #db4437 300deg);
}
.chrome::before { content: ""; position: absolute; inset: 13px; border-radius: 50%; background: #4a8af4; border: 3px solid #fff; }
.tb-explorer { width: 112px; }
.explorer { width: 48px; height: 40px; }
.tb-osk { margin-left: 10px; width: 91px; }
.osk-app { width: 52px; height: 64px; }
.tray { margin-left: auto; display: flex; align-items: center; padding-right: 55px; }
.tr-caret { width: 26px; height: 14px; }
.tr-vol { width: 38px; height: 34px; margin-left: 22px; }
.tr-wifi { width: 28px; height: 30px; margin-left: 23px; }
.clock { width: 130px; margin-left: 27px; display: flex; flex-direction: column; align-items: center; font-size: 27px; line-height: 43px; color: #f5f5f5; white-space: nowrap; }
.tr-note { width: 36px; height: 36px; margin-left: 38px; }
.edge-line { position: absolute; left: 4086px; top: 0; width: 2px; height: 90px; background: #8c9497; }
.edge-thumb { position: absolute; left: 4081px; top: -15px; width: 15px; height: 15px; border-radius: 8px 8px 0 0; background: #75878a; }

/* on-screen keyboard window */
.osk {
  position: absolute; left: 1375px; top: 1807px; width: 928px; height: 365px; background: #1a1a1a;
  box-shadow: 0 0 0 1px #3a3a3a;
}
.osk-title { height: 63px; background: #fff; display: flex; align-items: center; padding-left: 14px; color: #8a8a8a; font-size: 25.500px; }
.osk-icon { width: 36px; height: 44px; margin-right: 4px; flex: none; }
.osk-title span { width: 245px; flex: none; white-space: nowrap; }
.osk-min { width: 20px; height: 4px; margin-left: 356px; flex: none; }
.osk-max { width: 20px; height: 38px; border: 2px solid #eaeaea; margin-left: 84px; flex: none; }
.osk-close { width: 20px; height: 20px; margin-left: 86px; flex: none; }
.osk-body { padding: 55px 4px 0; display: flex; gap: 17px; }
.osk-main { width: 693px; display: flex; flex-direction: column; gap: 3.700px; }
.osk-row { display: flex; gap: 4px; height: 45.400px; }
.osk-nav { display: grid; grid-template-columns: 103px 103px; grid-auto-rows: 45.400px; gap: 3.700px 4px; }
.key {
  width: 40px; flex: none; background: #333; padding: 2px 5px; color: #f4f4f4; font-size: 21px; line-height: 30px; overflow: hidden;
}
.key.sm { font-size: 16.500px; padding-left: 3px; line-height: 32px; }
.key.wn { width: 103px; font-size: 22.500px; padding-left: 5px; }
.w50 { width: 50px; } .w54 { width: 54px; } .w63 { width: 63px; } .w77 { width: 77px; } .w85 { width: 85px; }
.w97 { width: 97px; } .w108 { width: 108px; } .w120 { width: 120px; } .w243 { width: 243px; }
.key.hl { background: #4d4a47; }
.key.two { display: flex; flex-direction: column; font-size: 17px; line-height: 1; padding: 5px 4px 3px; }
.key.two em { font-style: normal; color: #7f7f7f; font-size: 14.500px; line-height: 16px; }
.key.two b { font-weight: 400; color: #e2e2e2; margin-top: auto; text-align: center; padding-left: 6px; line-height: 20px; }
.bksp { width: 26px; height: 20px; display: block; margin-top: 4px; }
.arrow { padding: 4px 6px; }
.arrow svg { width: 26px; height: 22px; display: block; }
.winkey { width: 14px; height: 14px; display: block; margin: 22px 0 0 7px; }
.menukey { padding: 14px 0 0 18px; }
.menukey svg { width: 14px; height: 20px; display: block; }
```
